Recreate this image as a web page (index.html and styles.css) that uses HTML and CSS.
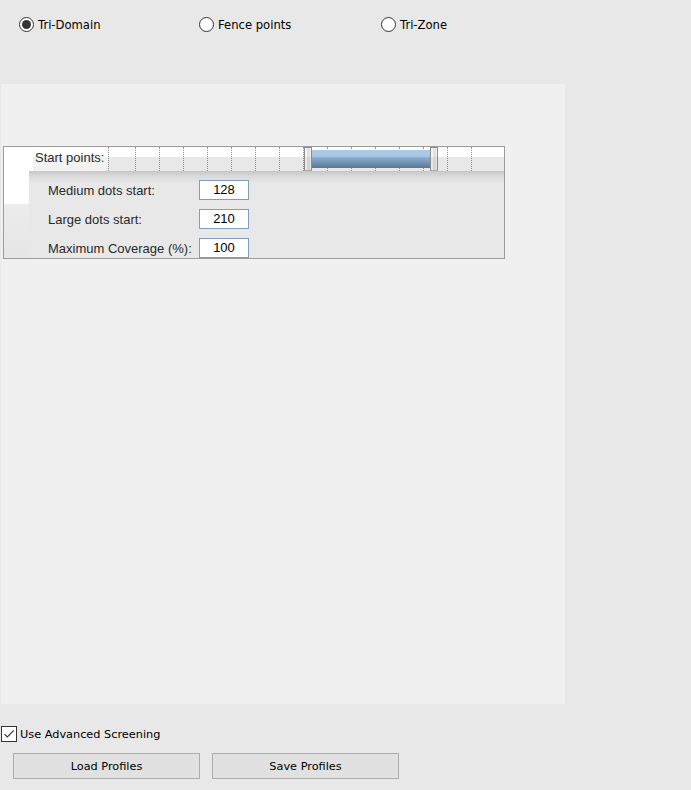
FILE: index.html
```html
<!DOCTYPE html>
<html>
<head>
<meta charset="utf-8">
<title>Screening</title>
<link rel="stylesheet" href="styles.css">
</head>
<body>
<div class="modes">
  <label class="radio r1"><span class="dot checked"></span><span>Tri-Domain</span></label>
  <label class="radio r2"><span class="dot"></span><span>Fence points</span></label>
  <label class="radio r3"><span class="dot"></span><span>Tri-Zone</span></label>
</div>
<div class="panel">
  <div class="group">
    <div class="ruler">
      <div class="ruler-side"></div>
      <div class="ruler-label">Start points:</div>
      <div class="track">
        <span class="tick first"></span><span class="tick"></span><span class="tick"></span><span class="tick"></span><span class="tick"></span><span class="tick"></span><span class="tick"></span><span class="tick"></span><span class="tick"></span><span class="tick"></span><span class="tick"></span><span class="tick"></span><span class="tick"></span><span class="tick"></span><span class="tick"></span><span class="tick last"></span>
        <div class="range">
          <span class="handle"></span>
          <span class="bar"></span>
          <span class="handle"></span>
        </div>
      </div>
    </div>
    <div class="body">
      <div class="side"></div>
      <div class="fields">
        <div class="row"><span class="lbl">Medium dots start:</span><span class="box">128</span></div>
        <div class="row"><span class="lbl">Large dots start:</span><span class="box">210</span></div>
        <div class="row"><span class="lbl">Maximum Coverage (%):</span><span class="box">100</span></div>
      </div>
    </div>
  </div>
</div>
<label class="check">
  <span class="cbox"><svg width="14" height="14" viewBox="0 0 14 14"><path d="M2.5 7.2 L5.3 10 L11.8 3.3" fill="none" stroke="#333" stroke-width="1.1"/></svg></span>
  <span>Use Advanced Screening</span>
</label>
<div class="buttons">
  <button class="btn">Load Profiles</button>
  <button class="btn">Save Profiles</button>
</div>
</body>
</html>
```

FILE: styles.css
```css
html, body {
  margin: 0;
  padding: 0;
}
body {
  background: #e8e8e8;
  width: 691px;
  height: 790px;
  overflow: hidden;
  font-family: "DejaVu Sans", sans-serif;
  font-size: 11.3px;
  color: #000;
}
.modes {
  height: 84px;
  box-sizing: border-box;
  padding: 17px 0 0 19px;
  display: grid;
  grid-template-columns: 180px 182px auto;
  align-items: start;
  font-size: 11.6px;
}
.radio {
  display: flex;
  align-items: center;
  gap: 4px;
  height: 15px;
}
.dot {
  width: 15px;
  height: 15px;
  box-sizing: border-box;
  border: 1px solid #333;
  border-radius: 50%;
  background: #fff;
  display: flex;
  align-items: center;
  justify-content: center;
}
.dot.checked::after {
  content: "";
  width: 9px;
  height: 9px;
  border-radius: 50%;
  background: #333;
}
.panel {
  margin-left: 1px;
  width: 564px;
  height: 620px;
  background: #f0f0f0;
  box-sizing: border-box;
  padding-top: 62px;
}
.group {
  margin-left: 2px;
  width: 502px;
  height: 113px;
  box-sizing: border-box;
  border: 1px solid #9b9b9b;
  overflow: hidden;
  font-family: "Liberation Sans", Arial, sans-serif;
  font-size: 13px;
  color: #2a2a2a;
}
.ruler {
  display: flex;
  height: 24px;
  background: linear-gradient(#fff 0 10px, #e8e8e8 10px);
}
.ruler-side {
  width: 29px;
  background: #fff;
}
.ruler-label {
  width: 75px;
  box-sizing: border-box;
  padding-left: 2px;
  line-height: 22px;
  white-space: nowrap;
  background: linear-gradient(#fff 0 10px, #f2f2f2 10px);
}
.track {
  flex: 1;
  display: flex;
  position: relative;
}
.tick {
  width: 24px;
  flex: none;
  box-sizing: border-box;
  border-left: 1px dotted #8e8e8e;
}
.tick.first {
  width: 27px;
}
.tick.last {
  flex: 1;
}
.range {
  position: absolute;
  left: 196px;
  top: 0;
  height: 24px;
  display: flex;
}
.handle {
  width: 8px;
  height: 24px;
  box-sizing: border-box;
  border: 1px solid #8c8c8c;
  border-bottom-color: #a8a8a8;
  background: linear-gradient(90deg, #f6f6f6 0 2px, #e2e2e2 2px 5px, #f2f2f2 5px);
  box-shadow: inset 0 -13px 0 rgba(0, 0, 0, 0.06);
}
.bar {
  width: 118px;
  height: 18px;
  margin-top: 3px;
  background: linear-gradient(#adcbe8 0, #a6c5e4 38%, #8eaccb 42%, #7494b5 70%, #587898 100%);
}
.body {
  display: flex;
  height: 87px;
}
.side {
  width: 25px;
  background: linear-gradient(#fff 0 33px, #ececec 33px, #e6e6e6 100%);
}
.fields {
  flex: 1;
  box-sizing: border-box;
  padding: 9px 0 0 19px;
  display: flex;
  flex-direction: column;
  gap: 9px;
  background: linear-gradient(#c6c6c6 0, #dadada 5px, #e8e8e8 13px);
  overflow: hidden;
}
.row {
  display: flex;
  align-items: center;
  height: 20px;
  flex: none;
}
.lbl {
  width: 151px;
  white-space: nowrap;
}
.box {
  width: 50px;
  height: 20px;
  box-sizing: border-box;
  border: 1px solid #7f9dbd;
  background: #fff;
  color: #000;
  text-align: center;
  line-height: 18px;
}
.check {
  margin: 22px 0 0 1px;
  display: flex;
  align-items: center;
  gap: 3px;
  height: 16px;
}
.cbox {
  width: 16px;
  height: 16px;
  box-sizing: border-box;
  border: 1px solid #333;
  background: #fff;
  display: flex;
  align-items: center;
  justify-content: center;
}
.cbox svg {
  display: block;
}
.buttons {
  margin: 11px 0 0 13px;
  display: flex;
  gap: 12px;
}
.btn {
  width: 187px;
  height: 26px;
  box-sizing: border-box;
  border: 1px solid #adadad;
  background: #e1e1e1;
  font-family: "DejaVu Sans", sans-serif;
  font-size: 11.3px;
  color: #000;
  padding: 0;
  border-radius: 0;
}
```
